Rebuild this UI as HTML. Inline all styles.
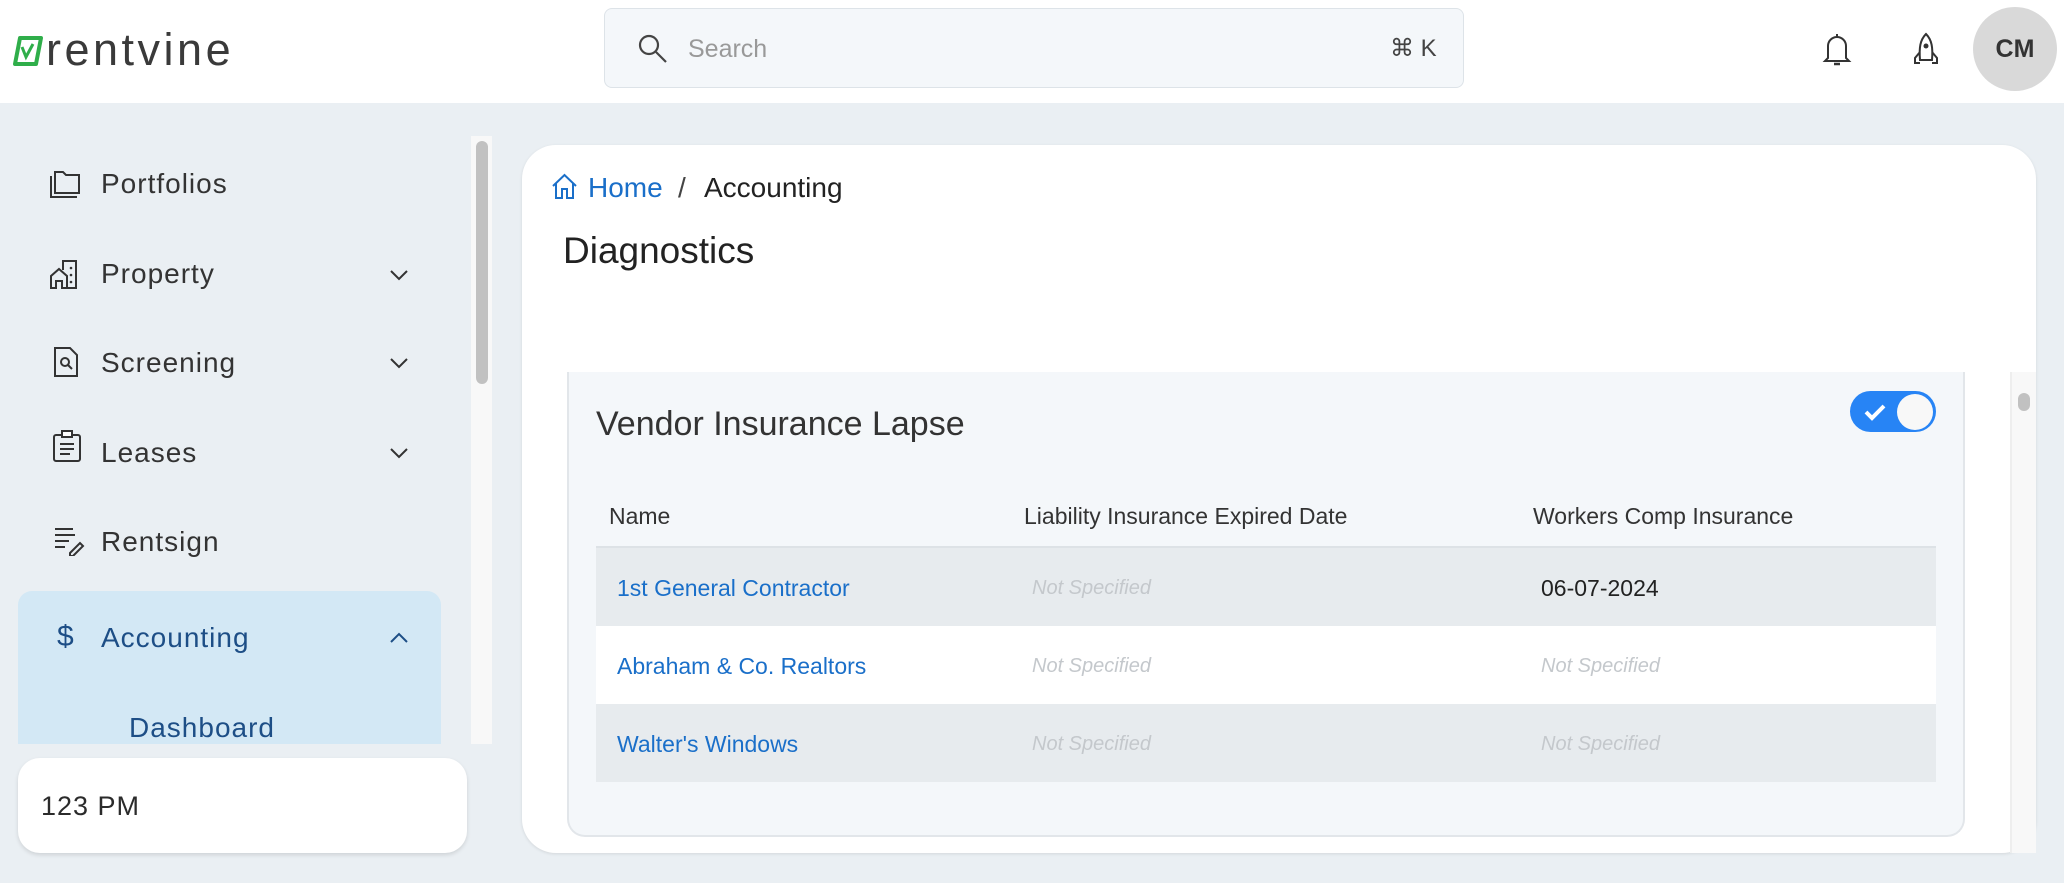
<!DOCTYPE html>
<html><head><meta charset="utf-8"><style>
*{box-sizing:border-box;margin:0;padding:0}
body{width:2064px;height:883px;overflow:hidden;background:#eaeff3;font-family:"Liberation Sans",sans-serif;color:#2b2b2b;position:relative}
.a{position:absolute}
.hdr{left:0;top:0;width:2064px;height:103px;background:#fff}
.nav{font-size:28px;letter-spacing:1px;color:#333;line-height:1}
.chev{left:389px;width:20px;height:20px}
.th{font-size:23px;color:#333}
.td{font-size:23px}
.link{color:#1a6fc9}
.ns{color:#c4c8cc;font-style:italic;font-size:20px}
</style></head><body>
<div class="a hdr"></div>
<!-- logo -->
<svg class="a" style="left:12px;top:35px" width="32" height="32" viewBox="0 0 32 32"><path d="M8 3h21l-5 26H3z" fill="none" stroke="#2fae4a" stroke-width="4" stroke-linejoin="round"/><path d="M10 12l4 10 7-13" fill="none" stroke="#2fae4a" stroke-width="3"/></svg>
<div class="a" style="left:46px;top:27px;font-size:45px;color:#3a3a3a;letter-spacing:3.5px;line-height:1">rentvine</div>
<!-- search -->
<div class="a" style="left:604px;top:8px;width:860px;height:80px;background:#f4f7fa;border:1px solid #dde3e8;border-radius:8px"></div>
<svg class="a" style="left:637px;top:33px" width="32" height="32" viewBox="0 0 32 32"><circle cx="12" cy="12" r="9" fill="none" stroke="#444" stroke-width="2.2"/><path d="M19 19l10 10" stroke="#444" stroke-width="2.2"/></svg>
<div class="a" style="left:688px;top:35px;font-size:25px;color:#999">Search</div>
<div class="a" style="left:1390px;top:34px;font-size:24px;color:#444">⌘ K</div>
<!-- bell -->
<svg class="a" style="left:1822px;top:31px" width="30" height="36" viewBox="0 0 30 36"><path d="M15 3v3M6 27V15a9 9 0 0118 0v12l3 3H3z" fill="none" stroke="#333" stroke-width="2"/><path d="M12 33h6" stroke="#333" stroke-width="2.5"/></svg>
<svg class="a" style="left:1912px;top:32px" width="28" height="34" viewBox="0 0 28 34"><path d="M14 2c-6 6-7 14-6 26h12c1-12 0-20-6-26zM8 20l-5 6v5h5M20 20l5 6v5h-5" fill="none" stroke="#333" stroke-width="2"/><circle cx="14" cy="14" r="2.5" fill="#333"/></svg>
<div class="a" style="left:1973px;top:7px;width:84px;height:84px;border-radius:50%;background:#d9d9d9;font-weight:bold;font-size:25px;color:#333;text-align:center;line-height:84px">CM</div>
<!-- sidebar -->
<div class="a" style="left:18px;top:591px;width:423px;height:153px;background:#d3e8f5;border-radius:14px 14px 0 0"></div>
<svg class="a" style="left:49px;top:167px" width="34" height="32" viewBox="0 0 34 32"><path d="M6 5h8l3 3h13v18H6zM2 9v21h26" fill="none" stroke="#333" stroke-width="2"/></svg>
<div class="a nav" style="left:101px;top:170px">Portfolios</div>
<svg class="a" style="left:49px;top:258px" width="34" height="32" viewBox="0 0 34 32"><path d="M2 30V18l8-7 8 7v12h-5v-7h-6v7zM14 12V3h13v27h-9" fill="none" stroke="#333" stroke-width="2"/><circle cx="22" cy="10" r="1.3" fill="#333"/><circle cx="22" cy="17" r="1.3" fill="#333"/><circle cx="22" cy="24" r="1.3" fill="#333"/></svg>
<div class="a nav" style="left:101px;top:260px">Property</div>
<svg class="a" style="left:53px;top:346px" width="28" height="32" viewBox="0 0 28 32"><path d="M2 2h15l7 7v21H2z" fill="none" stroke="#333" stroke-width="2"/><circle cx="12" cy="16" r="4" fill="none" stroke="#333" stroke-width="2"/><path d="M15 19l4 4" stroke="#333" stroke-width="2"/></svg>
<div class="a nav" style="left:101px;top:349px">Screening</div>
<svg class="a" style="left:52px;top:429px" width="30" height="34" viewBox="0 0 30 34"><rect x="2" y="6" width="26" height="26" rx="2" fill="none" stroke="#333" stroke-width="2"/><rect x="10" y="2" width="10" height="6" fill="#fff" stroke="#333" stroke-width="2"/><path d="M8 15h14M8 20h14M8 25h10" stroke="#333" stroke-width="2"/></svg>
<div class="a nav" style="left:101px;top:439px">Leases</div>
<svg class="a" style="left:54px;top:526px" width="32" height="30" viewBox="0 0 32 30"><path d="M1 3h18M1 9h20M1 15h14M1 21h10" stroke="#333" stroke-width="2"/><path d="M16 27l10-10 3 3-10 10h-3z" fill="none" stroke="#333" stroke-width="2"/></svg>
<div class="a nav" style="left:101px;top:528px">Rentsign</div>
<div class="a" style="left:57px;top:620px;font-size:30px;color:#1d4e86">$</div>
<div class="a nav" style="left:101px;top:624px;color:#1d4e86">Accounting</div>
<div class="a nav" style="left:129px;top:714px;color:#1d4e86">Dashboard</div>
<svg class="a chev" style="top:265px" viewBox="0 0 20 20"><path d="M2 6l8 8 8-8" fill="none" stroke="#333" stroke-width="2"/></svg>
<svg class="a chev" style="top:353px" viewBox="0 0 20 20"><path d="M2 6l8 8 8-8" fill="none" stroke="#333" stroke-width="2"/></svg>
<svg class="a chev" style="top:443px" viewBox="0 0 20 20"><path d="M2 6l8 8 8-8" fill="none" stroke="#333" stroke-width="2"/></svg>
<svg class="a chev" style="top:628px" viewBox="0 0 20 20"><path d="M2 14l8-8 8 8" fill="none" stroke="#1d4e86" stroke-width="2"/></svg>
<div class="a" style="left:471px;top:136px;width:21px;height:608px;background:#f8f8f8"></div>
<div class="a" style="left:476px;top:141px;width:12px;height:243px;background:#c1c1c1;border-radius:6px"></div>
<div class="a" style="left:18px;top:758px;width:449px;height:95px;background:#fff;border-radius:22px;box-shadow:0 2px 4px rgba(0,0,0,.12)"></div>
<div class="a" style="left:41px;top:791px;font-size:27px;color:#2b2b2b;letter-spacing:1px">123 PM</div>
<!-- main card -->
<div class="a" style="left:522px;top:145px;width:1514px;height:708px;background:#fff;border-radius:34px;box-shadow:0 1px 3px rgba(0,0,0,.1)"></div>
<svg class="a" style="left:551px;top:173px" width="27" height="27" viewBox="0 0 27 27"><path d="M2 13L13.5 2 25 13M5 10v15h6v-9h5v9h6V10" fill="none" stroke="#1a6fc9" stroke-width="2"/></svg>
<div class="a link" style="left:588px;top:172px;font-size:28px">Home</div>
<div class="a" style="left:678px;top:172px;font-size:28px;color:#444">/</div>
<div class="a" style="left:704px;top:172px;font-size:28px;color:#222">Accounting</div>
<div class="a" style="left:563px;top:230px;font-size:37px;color:#222">Diagnostics</div>
<!-- inner panel -->
<div class="a" style="left:567px;top:372px;width:1398px;height:465px;background:#f4f7fa;border:2px solid #e2e6ea;border-top:none;border-radius:0 0 18px 18px"></div>
<div class="a" style="left:2010px;top:372px;width:26px;height:481px;background:#f8f8f8;border-left:2px solid #eee"></div>
<div class="a" style="left:2018px;top:393px;width:12px;height:18px;background:#c1c1c1;border-radius:6px"></div>
<div class="a" style="left:596px;top:405px;font-size:34px;color:#333">Vendor Insurance Lapse</div>
<div class="a" style="left:1850px;top:391px;width:86px;height:41px;background:#2784f5;border-radius:21px"></div>
<div class="a" style="left:1897px;top:394px;width:36px;height:36px;background:#f8f8f8;border-radius:50%"></div>
<svg class="a" style="left:1863px;top:402px" width="24" height="20" viewBox="0 0 24 20"><path d="M3 10l6 6L21 4" fill="none" stroke="#fff" stroke-width="4"/></svg>
<div class="a th" style="left:609px;top:503px">Name</div>
<div class="a th" style="left:1024px;top:503px">Liability Insurance Expired Date</div>
<div class="a th" style="left:1533px;top:503px">Workers Comp Insurance</div>
<div class="a" style="left:596px;top:546px;width:1340px;height:2px;background:#dde2e6"></div>
<div class="a" style="left:596px;top:548px;width:1340px;height:78px;background:#e7ebee"></div>
<div class="a" style="left:596px;top:626px;width:1340px;height:78px;background:#fff"></div>
<div class="a" style="left:596px;top:704px;width:1340px;height:78px;background:#e7ebee"></div>
<div class="a td link" style="left:617px;top:575px">1st General Contractor</div>
<div class="a ns" style="left:1032px;top:577px">Not Specified</div>
<div class="a td" style="left:1541px;top:575px;color:#222">06-07-2024</div>
<div class="a td link" style="left:617px;top:653px">Abraham &amp; Co. Realtors</div>
<div class="a ns" style="left:1032px;top:655px">Not Specified</div>
<div class="a ns" style="left:1541px;top:655px">Not Specified</div>
<div class="a td link" style="left:617px;top:731px">Walter's Windows</div>
<div class="a ns" style="left:1032px;top:733px">Not Specified</div>
<div class="a ns" style="left:1541px;top:733px">Not Specified</div>
</body></html>
